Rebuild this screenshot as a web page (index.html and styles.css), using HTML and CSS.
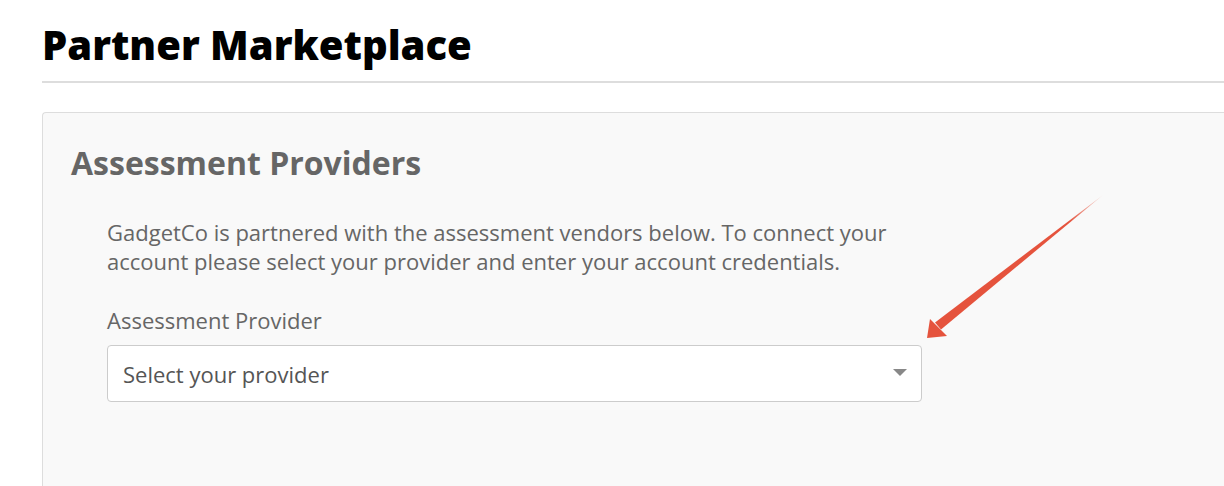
FILE: index.html
```html
<!DOCTYPE html>
<html lang="en">
<head>
  <meta charset="UTF-8" />
  <title>Partner Marketplace</title>
  <link rel="stylesheet" href="styles.css">
</head>
<body>
  <div class="page">
    <!-- Page header -->
    <h1 class="page-title">Partner Marketplace</h1>

    <!-- Providers panel -->
    <div class="panel">
      <h2 class="panel-title">Assessment Providers</h2>
      <div class="panel-body">
        <p class="intro">
          GadgetCo is partnered with the assessment vendors below. To connect your
          account please select your provider and enter your account credentials.
        </p>

        <label class="field-label" for="providerSelect">Assessment Provider</label>
        <div class="select-wrap">
          <select id="providerSelect" class="select">
            <option>Select your provider</option>
          </select>
          <span class="caret"></span>
        </div>
      </div>

      <!-- Annotation arrow -->
      <svg class="arrow" viewBox="0 0 180 150" width="180" height="150">
        <defs>
          <linearGradient id="fade" x1="1" y1="0" x2="0" y2="1">
            <stop offset="0" stop-color="#e5533d" stop-opacity="0.15" />
            <stop offset="0.2" stop-color="#e5533d" stop-opacity="1" />
          </linearGradient>
        </defs>
        <path d="M178 0 L16 134.5 L10 127.5 Z" fill="url(#fade)" />
        <path d="M2 143 L5 124 L22 141 Z" fill="#e5533d" />
      </svg>
    </div>
  </div>
</body>
</html>
```

FILE: styles.css
```css
/* Basic resets & layout */
html, body {
  margin: 0;
  padding: 0;
  width: 100%;
  height: 100%;
  background-color: #fff;
  font-family: "Open Sans", Lato, Arial, sans-serif;
  overflow: hidden;
}

.page {
  box-sizing: border-box;
  height: 100%;
  display: flex;
  flex-direction: column;
  padding: 22px 0 0 42px;
}

/* Page header */
.page-title {
  margin: 0;
  padding-bottom: 13px;
  font-size: 40px;
  font-weight: 800;
  line-height: 46px;
  color: #000;
  border-bottom: 2px solid #ddd;
}

/* Panel (runs off the right and bottom edges) */
.panel {
  position: relative;
  flex: 1;
  margin-top: 29px;
  padding: 30px 28px;
  background-color: #f9f9f9;
  border: 1px solid #ddd;
  border-right: 0;
  border-bottom: 0;
  border-radius: 4px 0 0 0;
}
.panel-title {
  margin: 0;
  font-size: 32px;
  font-weight: 700;
  line-height: 40px;
  color: #666;
}
.panel-body {
  padding: 35px 36px 0;
  width: 815px;
}
.intro {
  margin: 0 0 30px;
  font-size: 22px;
  line-height: 29px;
  color: #666;
}
.field-label {
  display: block;
  font-size: 22px;
  line-height: 28px;
  color: #666;
  margin-bottom: 11px;
}

/* Select */
.select-wrap {
  position: relative;
}
.select {
  -webkit-appearance: none;
  appearance: none;
  width: 100%;
  height: 57px;
  padding: 0 15px;
  font-family: inherit;
  font-size: 22px;
  color: #555;
  background-color: #fff;
  border: 1px solid #ccc;
  border-radius: 4px;
}
.caret {
  position: absolute;
  right: 15px;
  top: 24px;
  width: 0;
  height: 0;
  border-left: 7px solid transparent;
  border-right: 7px solid transparent;
  border-top: 7px solid #888;
}

/* Annotation arrow */
.arrow {
  position: absolute;
  left: 882px;
  top: 82px;
}
```
